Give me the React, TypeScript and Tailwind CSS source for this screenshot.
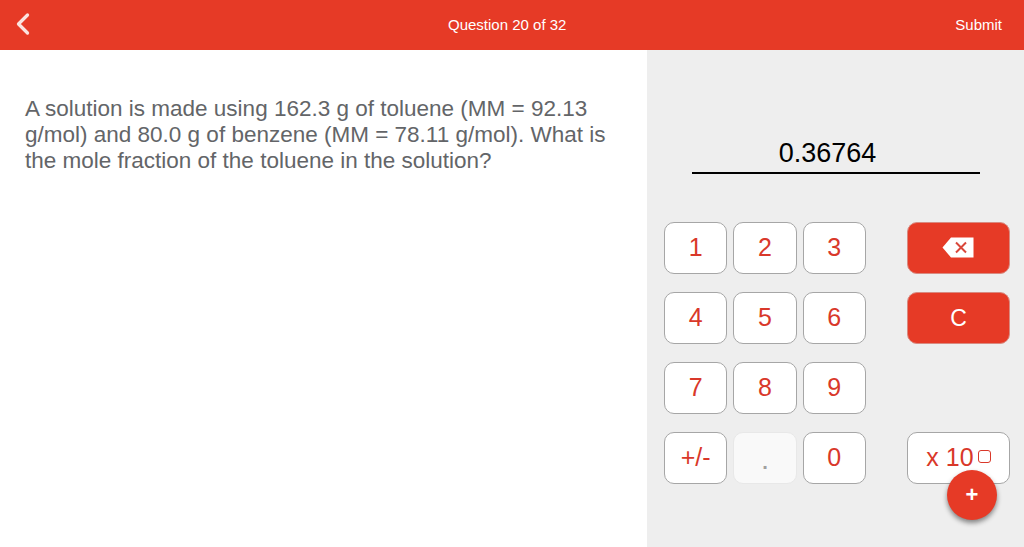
import { ChevronLeft } from 'lucide-react'

const keys = ['1', '2', '3', '4', '5', '6', '7', '8', '9', '+/-', '.', '0']

function Key({ label }: { label: string }) {
  if (label === '.') {
    return (
      <button className="h-[52px] rounded-[10px] border-[1.5px] border-[#e8e8e8] bg-[#f9f9f9] text-[#a0a0a0] text-[20px] font-bold pt-[8px]">
        .
      </button>
    )
  }
  return (
    <button className="h-[52px] rounded-[10px] border-[1.5px] border-[#a6a6a6] bg-white text-[#d9382a] text-[25px]">
      {label}
    </button>
  )
}

function BackspaceIcon() {
  return (
    <svg width="32" height="21" viewBox="0 0 32 21">
      <path d="M9 0.5H31.5V20.5H9L0.5 10.5Z" fill="#fff" />
      <path d="M14 5.5L24 15.5M24 5.5L14 15.5" stroke="#d9473a" strokeWidth="2" fill="none" />
    </svg>
  )
}

export default function App() {
  return (
    <div className="w-[1024px] h-[547px] flex flex-col overflow-hidden bg-white font-['Liberation_Sans',Arial,sans-serif]">
      <header className="h-[50px] shrink-0 bg-[#e63a26] text-white flex items-center justify-between pl-[5px] pr-[22px]">
        <ChevronLeft size={36} strokeWidth={2.2} className="text-[#fbe3df] mb-[2px]" />
        <span className="text-[15px] ml-[407px]">Question 20 of 32</span>
        <span className="text-[15px] ml-auto">Submit</span>
      </header>
      <div className="flex flex-1 min-h-0">
        <section className="w-[647px] shrink-0 pl-[25px] pr-[36px] pt-[46px] text-[22.5px] leading-[26px] text-[#636568]">
          A solution is made using 162.3 g of toluene (MM = 92.13 g/mol) and 80.0 g of benzene (MM = 78.11 g/mol). What is the mole fraction of the toluene in the solution?
        </section>
        <section className="flex-1 bg-[#eeeeee] pl-[17px] pr-[14px] pt-[84px]">
          <div className="ml-[28px] w-[288px] h-[40px] border-b-2 border-black text-black text-[27px] leading-[39px] text-center pr-[17px]">
            0.36764
          </div>
          <div className="flex justify-between mt-[48px]">
            <div className="w-[202px] grid grid-cols-3 gap-x-[6px] gap-y-[18px]">
              {keys.map((k) => (
                <Key key={k} label={k} />
              ))}
            </div>
            <div className="w-[103px] flex flex-col gap-[18px] relative">
              <button className="h-[52px] rounded-[10px] border-[1.5px] border-[#d98a80] bg-[#e63a26] flex items-center justify-center pb-[2px] pr-[2px]">
                <BackspaceIcon />
              </button>
              <button className="h-[52px] rounded-[10px] border-[1.5px] border-[#d98a80] bg-[#e63a26] text-white text-[23px]">
                C
              </button>
              <div className="h-[52px]" />
              <button className="h-[52px] rounded-[10px] border-[1.5px] border-[#a6a6a6] bg-white text-[#d9382a] text-[25px] flex items-center justify-center gap-[4px]">
                x 10
                <span className="w-[13px] h-[13px] rounded-[3px] border border-[#d9382a] mb-[4px]" />
              </button>
              <button className="absolute left-[40px] top-[248px] w-[50px] h-[50px] rounded-full bg-[#e63a26] text-white text-[22px] font-bold shadow-[0_3px_5px_rgba(0,0,0,0.45)] flex items-center justify-center pb-[2px]">
                +
              </button>
            </div>
          </div>
        </section>
      </div>
    </div>
  )
}
